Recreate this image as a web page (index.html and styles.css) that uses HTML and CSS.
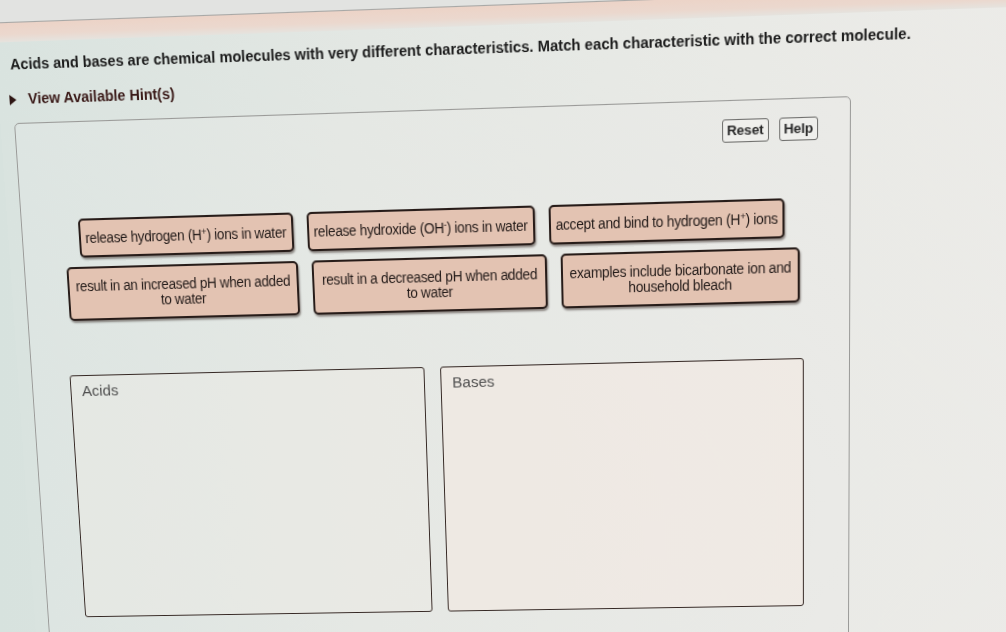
FILE: index.html
```html
<!DOCTYPE html>
<html lang="en">
<head>
<meta charset="utf-8">
<title>Acids and bases</title>
<link rel="stylesheet" href="styles.css">
</head>
<body>
<div class="page">
  <div class="topbar"></div>
  <div class="band"></div>
  <p class="title">Acids and bases are chemical molecules with very different characteristics. Match each characteristic with the correct molecule.</p>
  <div class="hint"><span class="tri"></span><span class="hint-text">View Available Hint(s)</span></div>
  <div class="panel">
    <div class="tools">
      <button class="btn">Reset</button>
      <button class="btn">Help</button>
    </div>
    <div class="chips">
      <div class="chip">release hydrogen (H<span class="sup">+</span>) ions in water</div>
      <div class="chip">release hydroxide (OH<span class="sup">-</span>) ions in water</div>
      <div class="chip">accept and bind to hydrogen (H<span class="sup">+</span>) ions</div>
      <div class="chip">result in an increased pH when added to water</div>
      <div class="chip">result in a decreased pH when added to water</div>
      <div class="chip">examples include bicarbonate ion and household bleach</div>
    </div>
    <div class="zones">
      <div class="zone zone-acids"><span class="zone-label">Acids</span></div>
      <div class="zone zone-bases"><span class="zone-label">Bases</span></div>
    </div>
  </div>
</div>
</body>
</html>
```
FILE: styles.css
```css
html, body {
  margin: 0;
  padding: 0;
  overflow: hidden;
  width: 1006px;
  height: 632px;
  background: linear-gradient(90deg, #d7e2de 0%, #e2e6e2 35%, #e8e9e6 70%, #ebeae7 100%);
  font-family: "Liberation Sans", Arial, sans-serif;
}

.page {
  width: 1060px;
  height: 680px;
  transform-origin: 0 0;
  transform: matrix3d(0.973346, -0.035439, 0, -0.00003273,
                      0.072496, 1.055198, 0, 0.00008985,
                      0, 0, 1, 0,
                      -8.1815, -1.0173, 0, 0.989856);
  background: linear-gradient(90deg, #d9e3df 0%, #e3e7e3 35%, #e9eae6 70%, #ecebe8 100%);
  padding-top: 1px;
  margin-top: -1px;
}

.topbar {
  height: 22px;
  background: #e2e3e1;
  border-bottom: 1px solid #a8a8a6;
}

.band {
  height: 18px;
  background: linear-gradient(180deg, #ecd3c7 0%, #ebd8ce 60%, #e5e3de 100%);
}

.title {
  margin: 13px 0 0 14px;
  font-size: 14.65px;
  line-height: 17px;
  font-weight: bold;
  color: #1c1c1c;
  white-space: nowrap;
}

.hint {
  margin: 16px 0 0 11px;
  display: flex;
  align-items: center;
  gap: 12px;
  font-size: 14.5px;
  line-height: 17px;
  font-weight: bold;
  color: #3a1a18;
}

.tri {
  width: 0;
  height: 0;
  border-top: 5px solid transparent;
  border-bottom: 5px solid transparent;
  border-left: 7px solid #2e1614;
}

.panel {
  margin: 14px 0 0 14px;
  width: 836px;
  box-sizing: border-box;
  border: 1px solid #9a9a98;
  border-radius: 5px;
  padding: 17px 0 60px 0;
  background: linear-gradient(90deg, #dde5e2 0%, #e5e8e4 40%, #eaeae7 100%);
}

.tools {
  display: flex;
  justify-content: flex-end;
  gap: 10px;
  padding-right: 31px;
}

.btn {
  font-family: "Liberation Sans", Arial, sans-serif;
  font-size: 13.5px;
  letter-spacing: -0.2px;
  font-weight: bold;
  color: #2a2a2a;
  height: 22px;
  padding: 0 4px;
  border: 1px solid #6f6f6d;
  border-radius: 3px;
  background: #efefec;
  line-height: 20px;
}

.chips {
  margin: 54px 6px 0 0;
  display: flex;
  flex-wrap: wrap;
  justify-content: center;
  gap: 9px 14px;
}

.chip {
  max-width: 238px;
  box-sizing: border-box;
  padding: 9.5px 5px;
  border: 2px solid #271c19;
  border-radius: 5px;
  background: #e3c3b2;
  color: #231b19;
  font-family: "Liberation Sans", Arial, sans-serif;
  font-size: 13.8px;
  letter-spacing: -0.3px;
  line-height: 15px;
  text-align: center;
  box-shadow: 1px 2px 2px rgba(30, 15, 10, 0.45);
}

.sup {
  font-size: 0.7em;
  vertical-align: 0.5em;
  line-height: 0;
}

.zones {
  margin: 54px 6px 0 0;
  display: grid;
  grid-template-columns: 367px 367px;
  justify-content: center;
  gap: 16px;
}

.zone {
  height: 247px;
  box-sizing: border-box;
  border: 1.5px solid #352824;
  border-radius: 3px;
  padding: 6px 11px;
}

.zone-acids {
  background: rgba(238, 236, 228, 0.45);
}

.zone-bases {
  background: rgba(244, 234, 226, 0.55);
}

.zone-label {
  font-size: 15.5px;
  line-height: 18px;
  color: #505050;
}
```
